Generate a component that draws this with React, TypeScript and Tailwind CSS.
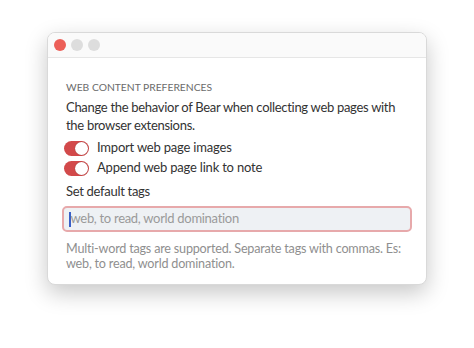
export default function App() {
  return (
    <div className="w-[474px] h-[348px] bg-white relative overflow-hidden" style={{ fontFamily: 'Lato, sans-serif' }}>
      <div className="absolute left-[47px] top-[32px] w-[380px] h-[253px] bg-white rounded-[8px] border border-[#d9d9d9] shadow-[0_8px_22px_rgba(0,0,0,0.22)] overflow-hidden flex flex-col">
        <div className="h-[25px] bg-[#fafafa] border-b border-[#e6e6e6] flex items-center gap-[5px] pl-[6px]">
          <div className="w-[12px] h-[12px] rounded-full bg-[#ec5f58]" />
          <div className="w-[12px] h-[12px] rounded-full bg-[#dddddd]" />
          <div className="w-[12px] h-[12px] rounded-full bg-[#dddddd]" />
        </div>
        <div className="flex flex-col pl-[18px] pr-[8px] pt-[22px]">
          <div className="text-[10.3px] text-[#6b6b6b] leading-[14px]">WEB CONTENT PREFERENCES</div>
          <div className="text-[13px] tracking-[-0.3px] text-[#333] leading-[18px] mt-[4px] whitespace-nowrap">
            Change the behavior of Bear when collecting web pages with
            <br />
            the browser extensions.
          </div>
          <div className="flex flex-col gap-[4px] mt-[6px]">
            {["Import web page images", "Append web page link to note"].map((t) => (
              <div key={t} className="flex items-center gap-[8px] h-[16px] -ml-[2px]">
                <div className="w-[25px] h-[15px] rounded-full bg-[#d2494a] relative">
                  <div className="absolute right-[1px] top-[1px] w-[13px] h-[13px] rounded-full bg-white shadow-[0_0_1px_rgba(0,0,0,0.4)]" />
                </div>
                <div className="text-[13px] tracking-[-0.2px] text-[#333]">{t}</div>
              </div>
            ))}
          </div>
          <div className="text-[13px] tracking-[-0.3px] text-[#333] leading-[18px] mt-[6px]">Set default tags</div>
          <div className="mt-[6px] -ml-[4px] mr-[6px] h-[26px] rounded-[5px] border-[2px] border-[#e7a9ab] bg-[#eef1f4] flex items-center pl-[5px]">
            <div className="w-[1.5px] h-[15px] bg-[#3a5fc8]" />
            <span className="text-[13px] tracking-[-0.3px] text-[#9a9a9a]">web, to read, world domination</span>
          </div>
          <div className="text-[12.6px] tracking-[-0.2px] text-[#8f8f8f] leading-[15px] mt-[9px] whitespace-nowrap">
            Multi-word tags are supported. Separate tags with commas. Es:
            <br />
            web, to read, world domination.
          </div>
        </div>
      </div>
    </div>
  );
}
